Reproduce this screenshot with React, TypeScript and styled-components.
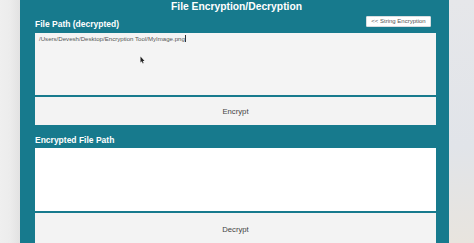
import React from "react";
import styled, { createGlobalStyle } from "styled-components";

const Global = createGlobalStyle`
  html, body { margin: 0; padding: 0; background: #ebebeb; }
  body { font-family: "Liberation Sans", Arial, sans-serif; }
`;

const Page = styled.div`
  display: flex;
  width: 474px;
  height: 243px;
  overflow: hidden;
  position: relative;
`;

const Gutter = styled.div<{ $w: number; $bg: string }>`
  flex: 0 0 ${(p) => p.$w}px;
  background: ${(p) => p.$bg};
`;

const Panel = styled.div`
  flex: 0 0 429px;
  background: #177a8d;
  padding: 0 13px 0 15px;
  box-sizing: border-box;
  display: flex;
  flex-direction: column;
  overflow: hidden;
  & > * { flex-shrink: 0; }
`;

const Title = styled.div`
  color: #ffffff;
  font-weight: bold;
  font-size: 10.3px;
  line-height: 14px;
  height: 14px;
  text-align: center;
  padding-left: 2px;
`;

const LabelRow = styled.div`
  display: flex;
  justify-content: space-between;
  align-items: flex-start;
  height: 19px;
`;

const Label = styled.div<{ $top: number }>`
  color: #ffffff;
  font-weight: bold;
  font-size: 8.5px;
  line-height: 10px;
  margin-top: ${(p) => p.$top}px;
`;

const SmallButton = styled.button`
  margin-top: 2px;
  margin-right: 5px;
  width: 65px;
  height: 11px;
  padding: 0;
  border: 1px solid #d8dde0;
  background: #ffffff;
  color: #555;
  font-family: "Liberation Sans", Arial, sans-serif;
  font-size: 6px;
  line-height: 9px;
  border-radius: 1px;
`;

const Area = styled.div<{ $bg: string; $h: number; $top: number }>`
  height: ${(p) => p.$h}px;
  margin-top: ${(p) => p.$top}px;
  background: ${(p) => p.$bg};
  box-sizing: border-box;
  padding: 2px 4px;
  font-size: 6.1px;
  line-height: 8px;
  color: #555;
  position: relative;
`;

const Caret = styled.span`
  display: inline-block;
  width: 1px;
  height: 7px;
  background: #333;
  vertical-align: -1px;
  margin-left: 0.5px;
`;

const ActionButton = styled.div<{ $h: number }>`
  margin-top: 2px;
  height: ${(p) => p.$h}px;
  background: #f3f3f3;
  color: #444;
  font-size: 7.7px;
  display: flex;
  align-items: center;
  justify-content: center;
`;

const Pointer = styled.svg`
  position: absolute;
  left: 140px;
  top: 56px;
`;

export default function App() {
  return (
    <>
      <Global />
      <Page>
        <Gutter $w={20} $bg="linear-gradient(90deg,#efefef 0%,#ececec 50%,#e2e2e2 100%)" />
        <Panel>
          <Title>File Encryption/Decryption</Title>
          <LabelRow>
            <Label $top={5}>File Path (decrypted)</Label>
            <SmallButton>&lt;&lt; String Encryption</SmallButton>
          </LabelRow>
          <Area $bg="#f4f4f4" $h={62} $top={0}>
            /Users/Devesh/Desktop/Encryption Tool/MyImage.png
            <Caret />
          </Area>
          <ActionButton $h={28}>Encrypt</ActionButton>
          <Label $top={10}>Encrypted File Path</Label>
          <Area $bg="#ffffff" $h={63} $top={3} />
          <ActionButton $h={32}>Decrypt</ActionButton>
        </Panel>
        <Gutter $w={25} $bg="linear-gradient(180deg,#e6e7ea 0%,#e1e4e9 60%,#e8e4de 100%)" />
        <Pointer width="5" height="8" viewBox="0 0 5 8">
          <path d="M0.5 0.5 L0.5 6.5 L1.8 5.2 L2.8 7.5 L3.6 7.1 L2.7 4.9 L4.5 4.9 Z" fill="#222" />
        </Pointer>
      </Page>
    </>
  );
}
